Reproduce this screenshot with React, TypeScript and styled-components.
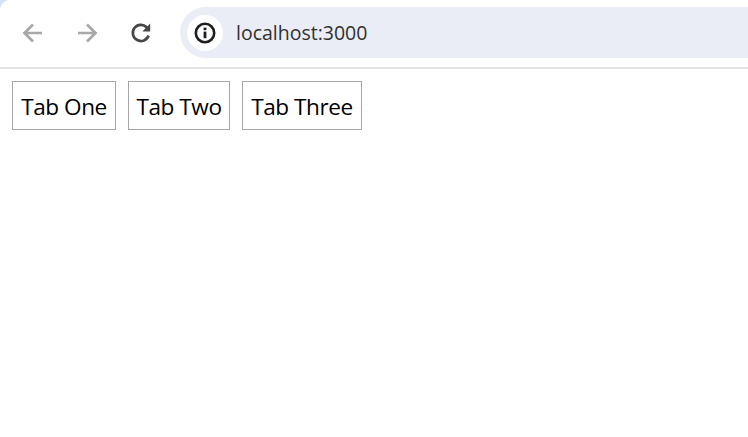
import styled, { createGlobalStyle } from 'styled-components'

const GlobalStyle = createGlobalStyle`
  html, body {
    margin: 0;
    padding: 0;
    height: 100%;
    background-color: white;
    overflow: hidden;
  }
  body {
    font-family: 'Open Sans', 'Noto Sans', sans-serif;
  }
`

const ChromeFrame = styled.div`
  background-color: #d3e3fd;
`

const Toolbar = styled.div`
  display: flex;
  align-items: center;
  height: 67px;
  padding: 7px 0 9px 12px;
  box-sizing: border-box;
  background-color: white;
  border-top-left-radius: 10px;
`

const NavButton = styled.div<{ $dim?: boolean }>`
  display: flex;
  align-items: center;
  justify-content: center;
  width: 42px;
  height: 42px;
  margin-right: 12px;
  color: ${(p) => (p.$dim ? '#a8a8a8' : '#474747')};
`

const AddressBar = styled.div`
  flex: 1;
  display: flex;
  align-items: center;
  height: 51px;
  margin-left: 6px;
  margin-right: -30px;
  padding-left: 7px;
  border-radius: 26px;
  background-color: #eaedf6;
`

const InfoBadge = styled.div`
  display: flex;
  align-items: center;
  justify-content: center;
  width: 36px;
  height: 36px;
  border-radius: 50%;
  background-color: white;
  color: #1f1f1f;
`

const Url = styled.span`
  margin-left: 13px;
  font-size: 19.5px;
  color: #303030;
`

const Divider = styled.div`
  height: 2px;
  background-color: #e1e1e1;
`

const TabRow = styled.div`
  display: flex;
  gap: 12px;
  padding: 12px;
`

const TabButton = styled.button<{ $width: number }>`
  width: ${(p) => p.$width}px;
  height: 49px;
  padding: 2px 0 0;
  background-color: white;
  border: 1px solid #a6a6a6;
  font-family: 'Open Sans', 'Noto Sans', sans-serif;
  font-size: 22.6px;
  color: black;
  letter-spacing: -0.45px;
  white-space: nowrap;
  cursor: pointer;
`

const ArrowLeft = () => (
  <svg width="24" height="24" viewBox="0 0 24 24" fill="none" stroke="currentColor" strokeWidth="2.7">
    <path d="M21 12H4M12 3.5L3.5 12L12 20.5" />
  </svg>
)

const ArrowRight = () => (
  <svg width="24" height="24" viewBox="0 0 24 24" fill="none" stroke="currentColor" strokeWidth="2.7">
    <path d="M3 12H20M12 3.5L20.5 12L12 20.5" />
  </svg>
)

const Reload = () => (
  <svg width="24" height="24" viewBox="0 0 24 24" fill="none">
    <path d="M19.6 14.5A8.1 8.1 0 1 1 17.7 6.2L19.6 8.4" stroke="currentColor" strokeWidth="2.7" />
    <path d="M21.2 2.6V10.4H13.4Z" fill="currentColor" />
  </svg>
)

const InfoIcon = () => (
  <svg width="22" height="22" viewBox="0 0 22 22" fill="none">
    <circle cx="11" cy="11" r="9.2" stroke="currentColor" strokeWidth="2.6" />
    <rect x="9.6" y="9.6" width="2.8" height="6.6" fill="currentColor" />
    <rect x="9.6" y="5.6" width="2.8" height="2.6" fill="currentColor" />
  </svg>
)

const tabs = [
  { label: 'Tab One', width: 104 },
  { label: 'Tab Two', width: 102 },
  { label: 'Tab Three', width: 120 },
]

const App = () => {
  return (
    <>
      <GlobalStyle />
      <ChromeFrame>
        <Toolbar>
          <NavButton $dim>
            <ArrowLeft />
          </NavButton>
          <NavButton $dim>
            <ArrowRight />
          </NavButton>
          <NavButton>
            <Reload />
          </NavButton>
          <AddressBar>
            <InfoBadge>
              <InfoIcon />
            </InfoBadge>
            <Url>localhost:3000</Url>
          </AddressBar>
        </Toolbar>
      </ChromeFrame>
      <Divider />
      <TabRow>
        {tabs.map((tab) => (
          <TabButton key={tab.label} $width={tab.width}>
            {tab.label}
          </TabButton>
        ))}
      </TabRow>
    </>
  )
}

export default App
